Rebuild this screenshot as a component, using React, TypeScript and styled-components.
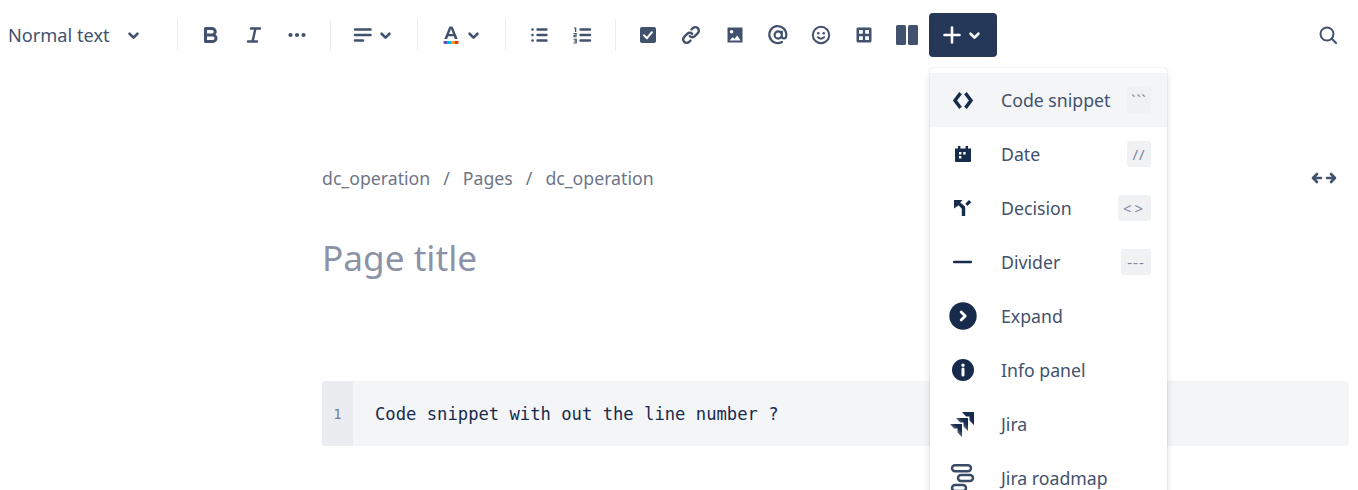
import React from "react";
import styled, { createGlobalStyle } from "styled-components";

const GlobalStyle = createGlobalStyle`
	html, body {
		margin: 0;
		height: 100%;
		background: #fff;
		overflow: hidden;
		font-family: "Noto Sans", "Open Sans", sans-serif;
	}
`;

const Page = styled.div`
	position: relative;
	height: 490px;
	overflow: hidden;
`;

const Toolbar = styled.div`
	display: flex;
	align-items: center;
	height: 44px;
	padding: 13px 8px 13px 8px;
`;

const StyleSelect = styled.div`
	display: flex;
	align-items: center;
	width: 158px;
	color: #42526e;
	font-size: 18.2px;
	svg {
		margin-left: 13px;
	}
`;

const Separator = styled.div`
	width: 1px;
	height: 32px;
	margin: 0 11px;
	background: #ebecf0;
`;

const ToolButton = styled.div<{ $wide?: boolean }>`
	display: flex;
	align-items: center;
	justify-content: center;
	width: ${(p) => (p.$wide ? "64.8px" : "43.2px")};
	height: 44px;
	color: #42526e;
`;

const InsertButton = styled.div`
	display: flex;
	align-items: center;
	justify-content: center;
	width: 68px;
	height: 44px;
	border-radius: 4px;
	background: #253858;
	color: #fff;
`;

const SearchButton = styled.div`
	display: flex;
	align-items: center;
	justify-content: center;
	width: 24px;
	height: 24px;
	margin-left: auto;
	margin-right: 10px;
	color: #42526e;
`;

const Content = styled.div`
	padding: 96px 9px 0 322px;
`;

const BreadcrumbRow = styled.div`
	display: flex;
	align-items: center;
	justify-content: space-between;
	height: 24px;
	padding-right: 12px;
`;

const Breadcrumbs = styled.div`
	display: flex;
	gap: 13px;
	color: #6e7687;
	font-size: 17.7px;
`;

const WidthToggle = styled.div`
	display: flex;
	color: #42526e;
`;

const PageTitle = styled.h1`
	margin: 42px 0 0;
	height: 50px;
	color: #8c92a8;
	font-size: 35.2px;
	font-weight: 400;
	line-height: 50px;
`;

const CodeBlock = styled.div`
	display: flex;
	height: 65px;
	margin-top: 99px;
	border-radius: 3px;
	background: #f4f5f7;
`;

const Gutter = styled.div`
	display: flex;
	align-items: center;
	justify-content: center;
	width: 31px;
	border-radius: 3px 0 0 3px;
	background: #ebecf0;
	color: #6b7f9e;
	font-family: "DejaVu Sans Mono", monospace;
	font-size: 14px;
`;

const CodeText = styled.code`
	align-self: center;
	padding-left: 22px;
	color: #172b4d;
	font-family: "DejaVu Sans Mono", monospace;
	font-size: 17.2px;
`;

const Menu = styled.div`
	position: absolute;
	top: 68px;
	left: 930px;
	width: 237px;
	padding-top: 5px;
	border-radius: 3px;
	background: #fff;
	box-shadow: 0 0 1px rgba(9, 30, 66, 0.31), 0 4px 8px -2px rgba(9, 30, 66, 0.25);
`;

const MenuItem = styled.div<{ $active?: boolean }>`
	display: flex;
	align-items: center;
	height: 54px;
	padding: 0 16px 0 19px;
	background: ${(p) => (p.$active ? "#f4f5f7" : "transparent")};
	color: #42526e;
	font-size: 17.7px;
`;

const MenuIcon = styled.div`
	display: flex;
	align-items: center;
	justify-content: center;
	flex: none;
	width: 28px;
	height: 28px;
	margin-right: 24px;
	color: #172b4d;
`;

const Shortcut = styled.span<{ $width: number; $spacing?: number }>`
	display: flex;
	align-items: center;
	justify-content: center;
	width: ${(p) => p.$width}px;
	height: 26px;
	margin-left: auto;
	border-radius: 3px;
	background: #f0f1f3;
	color: #7a869a;
	font-size: 15px;
	letter-spacing: ${(p) => p.$spacing ?? 1}px;
`;

const Chevron = ({ size = 21 }: { size?: number }) => (
	<svg width={size} height={size} viewBox="0 0 24 24" fill="none" stroke="currentColor" strokeWidth="3" strokeLinecap="round" strokeLinejoin="round">
		<path d="M7.5 10l4.5 4.5 4.5-4.5" />
	</svg>
);

const Icon = ({ children, size = 24 }: { children: React.ReactNode; size?: number }) => (
	<svg width={size} height={size} viewBox={`0 0 ${size} ${size}`} fill="currentColor">
		{children}
	</svg>
);

const Line = styled.path<{ $w?: number }>`
	fill: none;
	stroke: currentColor;
	stroke-width: ${(p) => p.$w ?? 2};
	stroke-linecap: round;
	stroke-linejoin: round;
`;

const BoldIcon = () => (
	<Icon>
		<Line $w={3} d="M6.500 5.500H13a3.200 3.200 0 0 1 0 6.500H6.500zM6.500 12h7.300a3.200 3.200 0 0 1 0 6.500H6.500z" />
	</Icon>
);
const ItalicIcon = () => (
	<Icon>
		<Line $w={2.4} d="M9 5.500h9M6 18.500h9M13.500 5.500l-3 13" />
	</Icon>
);
const MoreIcon = () => (
	<Icon>
		<circle cx="5.500" cy="12" r="2.100" />
		<circle cx="12" cy="12" r="2.100" />
		<circle cx="18.500" cy="12" r="2.100" />
	</Icon>
);
const AlignIcon = () => (
	<Icon>
		<Line $w={2.6} d="M4 6.500h15.500M4 12h15.500M4 17.500h8" />
	</Icon>
);
const TextColorIcon = () => (
	<svg width="24" height="24" viewBox="0 0 24 24">
		<path d="M12.900 3.500h-1.800c-.5 0-.8.3-1 .7L5.300 16h2.900l1-2.800h5.600l1 2.800h2.900L13.900 4.200c-.2-.4-.5-.7-1-.7zm-2.900 7.500l2-5 2 5z" fill="currentColor" />
		<path d="M4.500 18H8v3H5.700a1.200 1.200 0 0 1-1.200-1.200z" fill="#6554c0" />
		<rect x="8" y="18" width="4" height="3" fill="#00b8d9" />
		<rect x="12" y="18" width="4" height="3" fill="#ff991f" />
		<path d="M16 18h3.500v1.800a1.200 1.200 0 0 1-1.200 1.200H16z" fill="#de350b" />
	</svg>
);
const BulletIcon = () => (
	<Icon>
		<Line $w={2.4} d="M10.500 6.500H19.500M10.500 12H19.500M10.500 17.500H19.500" />
		<circle cx="5.500" cy="6.500" r="1.300" />
		<circle cx="5.500" cy="12" r="1.300" />
		<circle cx="5.500" cy="17.500" r="1.300" />
	</Icon>
);
const NumberIcon = () => (
	<Icon>
		<Line $w={2.400} d="M10.500 6.500H20M10.500 12H20M10.500 17.500H20" />
		<path d="M4 4.600h2.300v4.300H5V5.600H4zM3.500 10h3.200v2.700H5v.6h1.800v1H3.500v-2.500h2V11h-2zM3.500 15.700h3.300v4.700H3.500v-1h2.100v-.9H4v-1h1.600v-.8H3.500z" />
	</Icon>
);
const TaskIcon = () => (
	<Icon>
		<rect x="4" y="4" width="16" height="16" rx="2" />
		<path d="M8 12.200l3 3 5-6" fill="none" stroke="#fff" strokeWidth="2" strokeLinecap="round" strokeLinejoin="round" />
	</Icon>
);
const LinkIcon = () => (
	<Icon>
		<Line $w={2.400} d="M10.800 13.200a3.500 3.500 0 0 0 5 0l3-3a3.500 3.500 0 0 0-5-5l-1.300 1.300" />
		<Line $w={2.400} d="M13.200 10.800a3.500 3.500 0 0 0-5 0l-3 3a3.500 3.500 0 0 0 5 5l1.300-1.300" />
	</Icon>
);
const ImageIcon = () => (
	<Icon>
		<path fillRule="evenodd" d="M4.500 4.500h15v15h-15zM8.600 7a1.800 1.800 0 1 0 0 3.600 1.800 1.800 0 0 0 0-3.600zM6.500 17.500h11l-3.200-5-2.800 3.300-1.800-1.500z" />
	</Icon>
);
const AtIcon = () => (
	<Icon>
		<Line $w={2.200} d="M16 19a8.500 8.500 0 1 1 4.300-7c0 2-.8 3.500-2.300 3.500s-2.200-1-2.200-2.500V8.500M15.800 12a3.600 3.600 0 1 1-7.200 0 3.600 3.600 0 0 1 7.200 0z" />
	</Icon>
);
const EmojiIcon = () => (
	<Icon>
		<circle cx="12" cy="12" r="8.200" fill="none" stroke="currentColor" strokeWidth="2" />
		<circle cx="9.300" cy="10.200" r="1.300" />
		<circle cx="14.700" cy="10.200" r="1.300" />
		<Line d="M8.800 14.200c1.700 1.900 4.700 1.900 6.400 0" />
	</Icon>
);
const TableIcon = () => (
	<Icon>
		<path fillRule="evenodd" d="M6 4.500h12A1.500 1.500 0 0 1 19.500 6v12a1.500 1.500 0 0 1-1.500 1.500H6A1.500 1.500 0 0 1 4.500 18V6A1.500 1.500 0 0 1 6 4.500zM7 7v3.800h3.800V7zm6.200 0v3.800H17V7zM7 13.200V17h3.800v-3.800zm6.200 0V17H17v-3.800z" />
	</Icon>
);
const LayoutIcon = () => (
	<Icon>
		<rect x="1" y="2" width="10" height="20" rx="1.500" />
		<rect x="13" y="2" width="10" height="20" rx="1.500" />
	</Icon>
);
const PlusIcon = () => (
	<svg width="24" height="24" viewBox="0 0 24 24" fill="none" stroke="currentColor" strokeWidth="2.600" strokeLinecap="round">
		<path d="M12 4.500v15M4.500 12h15" />
	</svg>
);
const SearchIcon = () => (
	<Icon>
		<circle cx="11" cy="11" r="6.500" fill="none" stroke="currentColor" strokeWidth="2" />
		<Line $w={2.200} d="M16 16l4 4" />
	</Icon>
);
const WidthIcon = () => (
	<svg width="26" height="14" viewBox="0 0 26 14" fill="none" stroke="currentColor" strokeWidth="2.600" strokeLinecap="round" strokeLinejoin="round">
		<path d="M10 7H2.500M6 3L2 7l4 4M16 7h7.500M20 3l4 4-4 4" />
	</svg>
);

const CodeIcon = () => (
	<Icon size={28}>
		<path d="M10.500 8.500L6 14.500l4.500 6M17.500 8.500l4.500 6-4.500 6" fill="none" stroke="currentColor" strokeWidth="3.400" strokeLinecap="square" />
	</Icon>
);
const DateIcon = () => (
	<Icon size={28}>
		<path fillRule="evenodd" d="M9 6h2.400v2.500h5.200V6H19v2.500h3V21a1 1 0 0 1-1 1H7a1 1 0 0 1-1-1V8.500h3zM10 12v2.400h2.400V12zm4.200 0v2.400h2.400V12zM10 16v2.400h2.400V16z" />
	</Icon>
);
const DecisionIcon = () => (
	<Icon size={28}>
		<path d="M5 6h8.500l-2.300 2.400 4.100 3.300c.6.600.9 1.300.9 2.100V22h-3.400v-7.200l-3.200-3.600L5 14.500z" />
		<path d="M20 6l2.300 2.200-3.800 3.800-2.200-2.200z" />
	</Icon>
);
const DividerIcon = () => (
	<Icon size={28}>
		<rect x="4" y="12.700" width="19" height="2.600" rx="1" />
	</Icon>
);
const ExpandIcon = () => (
	<Icon size={28}>
		<circle cx="14" cy="14" r="13.700" />
		<path d="M12.200 10l4 4-4 4" fill="none" stroke="#fff" strokeWidth="2.800" strokeLinecap="round" strokeLinejoin="round" />
	</Icon>
);
const InfoIcon = () => (
	<Icon size={28}>
		<path fillRule="evenodd" d="M14 3a11 11 0 1 1 0 22 11 11 0 0 1 0-22zm-1.500 10v6a1.500 1.500 0 0 0 3 0v-6a1.500 1.500 0 0 0-3 0zM14 7.500a1.700 1.700 0 1 0 0 3.400 1.700 1.700 0 0 0 0-3.400z" />
	</Icon>
);
const JiraIcon = () => (
	<svg width="28" height="28" viewBox="0 0 28 28" fill="currentColor">
		<defs>
			<linearGradient id="jira-fade" x1="1" y1="0" x2="0" y2="1">
				<stop offset="0.3" stopColor="#172b4d" />
				<stop offset="0.95" stopColor="#172b4d" stopOpacity="0.15" />
			</linearGradient>
		</defs>
		<path d="M13 2h12v13l-4.500-4.500V6.500h-3.500z" />
		<path d="M7 8h12v13l-4.500-4.500v-4h-3.500z" fill="url(#jira-fade)" />
		<path d="M1 14h12v13l-4.500-4.500v-4H5z" fill="url(#jira-fade)" />
	</svg>
);
const RoadmapIcon = () => (
	<svg width="28" height="28" viewBox="0 0 28 28" fill="none" stroke="currentColor" strokeWidth="2.400" opacity="0.85">
		<rect x="3" y="1.200" width="19" height="6" rx="3" />
		<rect x="9" y="11" width="15" height="6" rx="3" />
		<rect x="3" y="21" width="14" height="6" rx="3" />
	</svg>
);

const menuItems = [
	{ label: "Code snippet", icon: <CodeIcon />, shortcut: "```", width: 24, active: true },
	{ label: "Date", icon: <DateIcon />, shortcut: "//", width: 24 },
	{ label: "Decision", icon: <DecisionIcon />, shortcut: "<>", width: 33, spacing: 3 },
	{ label: "Divider", icon: <DividerIcon />, shortcut: "---", width: 30 },
	{ label: "Expand", icon: <ExpandIcon /> },
	{ label: "Info panel", icon: <InfoIcon /> },
	{ label: "Jira", icon: <JiraIcon /> },
	{ label: "Jira roadmap", icon: <RoadmapIcon /> },
];

export default function App() {
	return (
		<Page>
			<GlobalStyle />
			<Toolbar>
				<StyleSelect>
					Normal text
					<Chevron />
				</StyleSelect>
				<Separator />
				<ToolButton><BoldIcon /></ToolButton>
				<ToolButton><ItalicIcon /></ToolButton>
				<ToolButton><MoreIcon /></ToolButton>
				<Separator />
				<ToolButton $wide><AlignIcon /><Chevron /></ToolButton>
				<Separator />
				<ToolButton $wide><TextColorIcon /><Chevron /></ToolButton>
				<Separator />
				<ToolButton><BulletIcon /></ToolButton>
				<ToolButton><NumberIcon /></ToolButton>
				<Separator />
				<ToolButton><TaskIcon /></ToolButton>
				<ToolButton><LinkIcon /></ToolButton>
				<ToolButton><ImageIcon /></ToolButton>
				<ToolButton><AtIcon /></ToolButton>
				<ToolButton><EmojiIcon /></ToolButton>
				<ToolButton><TableIcon /></ToolButton>
				<ToolButton><LayoutIcon /></ToolButton>
				<InsertButton>
					<PlusIcon />
					<Chevron />
				</InsertButton>
				<SearchButton><SearchIcon /></SearchButton>
			</Toolbar>
			<Content>
				<BreadcrumbRow>
					<Breadcrumbs>
						<span>dc_operation</span>
						<span>/</span>
						<span>Pages</span>
						<span>/</span>
						<span>dc_operation</span>
					</Breadcrumbs>
					<WidthToggle><WidthIcon /></WidthToggle>
				</BreadcrumbRow>
				<PageTitle>Page title</PageTitle>
				<CodeBlock>
					<Gutter>1</Gutter>
					<CodeText>Code snippet with out the line number ?</CodeText>
				</CodeBlock>
			</Content>
			<Menu>
				{menuItems.map((item) => (
					<MenuItem key={item.label} $active={item.active}>
						<MenuIcon>{item.icon}</MenuIcon>
						{item.label}
						{item.shortcut && (
							<Shortcut $width={item.width ?? 24} $spacing={item.spacing}>
								{item.shortcut}
							</Shortcut>
						)}
					</MenuItem>
				))}
			</Menu>
		</Page>
	);
}
